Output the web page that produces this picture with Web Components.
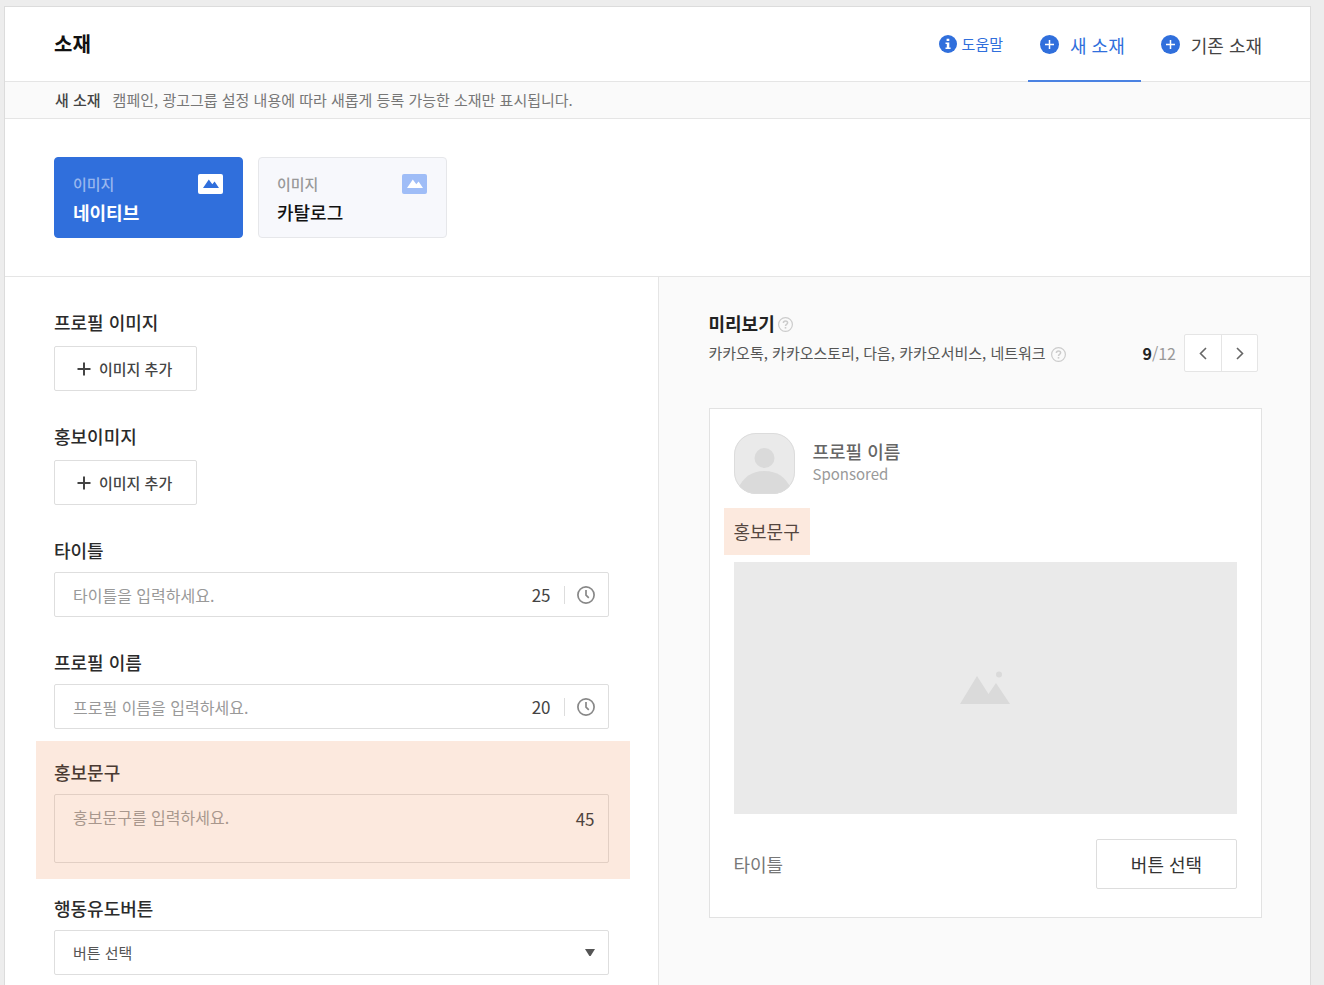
<!DOCTYPE html>
<html lang="ko">
<head>
<meta charset="utf-8">
<meta name="viewport" content="width=device-width, initial-scale=1">
<title>소재</title>
<style>
  :root {
    --blue: #306fdc;
    --line: #e5e5e5;
    --box-line: #dedede;
    --peach: #fce9de;
  }
  body {
    margin: 0;
    padding: 6px 13px 0 4px;
    background: #ededed;
    color: #333;
    font: 400 18px/24px "Noto Sans CJK KR", "Noto Sans", sans-serif;
  }
  .types { display: flex; gap: 15px; padding: 38px 49px; border-bottom: 1px solid var(--line); }
  .columns { display: grid; grid-template-columns: 1fr 1fr; flex: 1; }
  .form { display: flex; flex-direction: column; gap: 33px; padding: 33px 49px 12px; }
  .preview { padding: 34px 48px 40px 50px; background: #fafafa; border-left: 1px solid var(--line); }
</style>
</head>
<body>
<creative-panel heading="소재">
  <help-link slot="tabs">도움말</help-link>
  <panel-tab slot="tabs" active>새 소재</panel-tab>
  <panel-tab slot="tabs">기존 소재</panel-tab>
  <notice-bar heading="새 소재">캠페인, 광고그룹 설정 내용에 따라 새롭게 등록 가능한 소재만 표시됩니다.</notice-bar>
  <section class="types">
    <type-card kind="이미지" selected>네이티브</type-card>
    <type-card kind="이미지">카탈로그</type-card>
  </section>
  <div class="columns">
    <section class="form">
      <image-field label="프로필 이미지"></image-field>
      <image-field label="홍보이미지"></image-field>
      <text-field label="타이틀" hint="타이틀을 입력하세요." count="25"></text-field>
      <text-field label="프로필 이름" hint="프로필 이름을 입력하세요." count="20"></text-field>
      <copy-field label="홍보문구" hint="홍보문구를 입력하세요." count="45"></copy-field>
      <select-field label="행동유도버튼" value="버튼 선택"></select-field>
    </section>
    <section class="preview">
      <preview-head heading="미리보기" page="9" total="12">카카오톡, 카카오스토리, 다음, 카카오서비스, 네트워크</preview-head>
      <ad-preview>
        <span slot="name">프로필 이름</span>
        <span slot="copy">홍보문구</span>
        <span slot="title">타이틀</span>
        <span slot="action">버튼 선택</span>
      </ad-preview>
    </section>
  </div>
</creative-panel>

<script>
const base = `
  *, *::before, *::after { box-sizing: border-box; }
  :host { display: block; }
  svg { display: block; flex: none; }
  button, input, textarea, select { font: inherit; color: inherit; margin: 0; border-radius: 0; }
  button { cursor: pointer; }
`;
const fieldStyle = `
  label { display: block; font-weight: 500; color: #2b2b2b; margin-bottom: 10px; }
  .box { display: flex; align-items: center; height: 45px; border: 1px solid var(--box-line); border-radius: 2px; background: #fff; }
  input, textarea { flex: 1; min-width: 0; border: 0; outline: 0; background: none; padding: 0; font-size: 16px; line-height: 24px; }
  ::placeholder { color: #999; opacity: 1; }
  .count { font-size: 17px; color: #444; }
`;

class BaseElement extends HTMLElement {
  connectedCallback() {
    if (this.shadowRoot) return;
    this.attachShadow({ mode: "open" });
    this.shadowRoot.innerHTML = `<style>${base}${this.styles()}</style>${this.markup()}`;
  }
  attr(name) { return this.getAttribute(name) || ""; }
  styles() { return ""; }
}

class CreativePanel extends BaseElement {
  styles() { return `
    :host { display: flex; flex-direction: column; min-height: calc(100vh - 7px); background: #fff; border: 1px solid #dcdcdc; border-bottom: 0; }
    header { display: flex; height: 75px; justify-content: space-between; padding: 0 32px 0 49px; border-bottom: 1px solid var(--line); }
    h1 { margin: 0; align-self: center; font-size: 20px; font-weight: 700; color: #111; }
    nav { display: flex; }
  `; }
  markup() { return `<header><h1>${this.attr("heading")}</h1><nav><slot name="tabs"></slot></nav></header><slot></slot>`; }
}

class HelpLink extends BaseElement {
  styles() { return `
    :host { display: flex; align-items: center; margin-right: 25px; }
    a { display: flex; align-items: center; gap: 5px; font-size: 15px; color: var(--blue); text-decoration: none; }
  `; }
  markup() { return `<a href="#help"><svg width="18" height="18" viewBox="0 0 18 18"><circle cx="9" cy="9" r="9" fill="#306fdc"/><path d="M7.6 3.8h2.7v2.3H7.6zM6.5 7.4h3.8v5.1h1.3V14H6.5v-1.5h1.3V8.9H6.5z" fill="#fff"/></svg><slot></slot></a>`; }
}

class PanelTab extends BaseElement {
  styles() { return `
    :host { display: flex; margin-bottom: -1px; color: #444; border: solid transparent; border-width: 2px 0; }
    :host([active]) { color: var(--blue); border-bottom-color: #4a82e2; margin-right: 8px; }
    button { display: flex; align-items: center; gap: 11px; padding: 0 16px 0 12px; border: 0; background: none; }
  `; }
  markup() { return `<button type="button"><svg width="19" height="19" viewBox="0 0 19 19"><circle cx="9.5" cy="9.5" r="9.5" fill="#306fdc"/><path d="M9.5 5v9M5 9.5h9" stroke="#fff" stroke-width="1.5"/></svg><slot></slot></button>`; }
}

class NoticeBar extends BaseElement {
  styles() { return `
    :host { display: flex; gap: 12px; align-items: center; height: 36px; padding: 0 50px; background: #fafafa; border-bottom: 1px solid var(--line); font-size: 15px; color: #777; }
    strong { font-weight: 500; color: #444; }
  `; }
  markup() { return `<strong>${this.attr("heading")}</strong><span><slot></slot></span>`; }
}

class TypeCard extends BaseElement {
  styles() { return `
    button { display: grid; grid-template-columns: 1fr auto; row-gap: 4px; width: 189px; padding: 14px 19px 13px 18px; text-align: left; border: 1px solid #e6e7ea; border-radius: 4px; background: #f7f8fc; color: #111; --badge: #9fbdf7; --peak: #fff; }
    :host([selected]) button { background: var(--blue); border-color: var(--blue); color: #fff; --badge: #fff; --peak: #306fdc; }
    .kind { font-size: 15px; color: #999; font-weight: 500; }
    :host([selected]) .kind { color: #98b7ee; }
    .name { grid-column: 1 / -1; font-weight: 500; }
    :host([selected]) .name { font-weight: 700; }
    svg { align-self: center; }
  `; }
  markup() { return `<button type="button"><span class="kind">${this.attr("kind")}</span>
    <svg width="25" height="20" viewBox="0 0 25 20"><rect width="25" height="20" rx="2" style="fill:var(--badge)"/><path d="M5 14l5.8-8.6 3.5 4.8 2.3-2.6L21 14z" style="fill:var(--peak)"/></svg>
    <span class="name"><slot></slot></span></button>`; }
}

class ImageField extends BaseElement {
  styles() { return fieldStyle + `
    label { margin-bottom: 12px; }
    button { display: flex; align-items: center; gap: 8px; height: 45px; padding: 0 24px 0 22px; border: 1px solid var(--box-line); border-radius: 2px; background: #fff; font-size: 15px; font-weight: 500; color: #444; }
  `; }
  markup() { return `<label for="add">${this.attr("label")}</label><button id="add" type="button"><svg width="14" height="14" viewBox="0 0 14 14"><path d="M7 .5v13M.5 7h13" stroke="#444" stroke-width="2"/></svg>이미지 추가</button>`; }
}

class TextField extends BaseElement {
  styles() { return fieldStyle + `
    .box { padding: 0 13px 0 18px; }
    button { padding: 0 0 0 12px; border: 0; border-left: 1px solid #ddd; margin-left: 13px; background: none; }
  `; }
  markup() { return `<label for="in">${this.attr("label")}</label><div class="box"><input id="in" type="text" placeholder="${this.attr("hint")}"><span class="count">${this.attr("count")}</span>
    <button type="button" aria-label="${this.attr("label")}"><svg width="18" height="18" viewBox="0 0 18 18" fill="none" stroke="#888"><circle cx="9" cy="9" r="8.1" stroke-width="1.7"/><path d="M9 4v5.2l2.8 2.6" stroke-width="1.7"/></svg></button></div>`; }
}

class CopyField extends BaseElement {
  styles() { return fieldStyle + `
    :host { margin: -21px -21px -16px -18px; padding: 19px 21px 16px 18px; background: var(--peach); }
    label { color: #4a3a32; }
    .box { height: 69px; align-items: flex-start; padding: 10px 13px 0 18px; background: none; border-color: #e2cfc4; }
    textarea { height: 48px; resize: none; overflow: hidden; }
    ::placeholder { color: #a8978d; }
    .count { padding-top: 2px; color: #4f443e; }
  `; }
  markup() { return `<label for="copy">${this.attr("label")}</label><div class="box"><textarea id="copy" placeholder="${this.attr("hint")}"></textarea><span class="count">${this.attr("count")}</span></div>`; }
}

class SelectField extends BaseElement {
  styles() { return fieldStyle + `
    .box { position: relative; }
    select { appearance: none; width: 100%; height: 100%; padding: 0 40px 0 18px; border: 0; background: none; font-size: 15px; color: #555; }
    svg { position: absolute; right: 13px; pointer-events: none; }
  `; }
  markup() { return `<label for="sel">${this.attr("label")}</label><div class="box"><select id="sel"><option>${this.attr("value")}</option></select><svg width="10" height="7" viewBox="0 0 10 7"><path d="M0 0h10L5.6 7H4.4z" fill="#555"/></svg></div>`; }
}

class HelpMark extends BaseElement {
  styles() { return `
    :host { display: inline-block; }
    button { display: block; padding: 0; border: 0; background: none; }
  `; }
  markup() { return `<button type="button" aria-label="도움말"><svg width="15" height="15" viewBox="0 0 15 15" fill="none" stroke="#ccc"><circle cx="7.5" cy="7.5" r="6.9" stroke-width="1.2"/><path d="M5.4 6c0-1.3.9-2 2.1-2s2.1.7 2.1 1.8c0 1.500-2.100 1.500-2.100 3.100" stroke-width="1.500"/><path d="M7.500 10v1.600" stroke-width="1.600"/></svg></button>`; }
}

class PreviewHead extends BaseElement {
  styles() { return `
    :host { display: flex; justify-content: space-between; align-items: flex-end; margin: 0 4px 36px 0; }
    .texts { padding-bottom: 7px; }
    h2, p { display: flex; align-items: center; gap: 5px; margin: 0; }
    h2 { gap: 3px; font-size: 18px; font-weight: 700; color: #222; margin-bottom: 6px; }
    p { font-size: 15px; color: #555; }
    help-mark { padding-top: 3px; }
    .pager { display: flex; align-items: center; white-space: nowrap; font-size: 16px; color: #999; }
    b { color: #222; }
    .steps { display: flex; margin-left: 8px; border: 1px solid var(--line); border-radius: 2px; background: #fff; }
    .steps button { display: grid; place-items: center; width: 36px; height: 36px; padding: 0; border: 0; background: none; }
    .steps button + button { border-left: 1px solid var(--line); }
  `; }
  markup() { return `<div class="texts"><h2>${this.attr("heading")}<help-mark></help-mark></h2><p><span><slot></slot></span><help-mark></help-mark></p></div>
    <div class="pager"><span><b>${this.attr("page")}</b>/${this.attr("total")}</span><div class="steps">
    <button type="button" aria-label="이전"><svg width="8" height="13" viewBox="0 0 8 13" fill="none" stroke="#666" stroke-width="1.6"><path d="M7 1L1.5 6.5 7 12"/></svg></button>
    <button type="button" aria-label="다음"><svg width="8" height="13" viewBox="0 0 8 13" fill="none" stroke="#666" stroke-width="1.6"><path d="M1 1l5.5 5.5L1 12"/></svg></button></div></div>`; }
}

class AdPreview extends BaseElement {
  styles() { return `
    :host { padding: 24px 24px 28px; background: #fff; border: 1px solid #e2e2e2; }
    .who { display: flex; align-items: center; gap: 18px; color: #666; font-weight: 500; }
    .who div { display: flex; flex-direction: column; padding-bottom: 4px; }
    small { font-size: 15px; line-height: 22px; font-weight: 400; color: #999; }
    .copy { width: fit-content; margin: 14px 0 7px -10px; padding: 10px; line-height: 27px; background: var(--peach); color: #54463f; }
    .image { display: grid; place-items: center; aspect-ratio: 2 / 1; background: #eaeaea; }
    footer { display: flex; justify-content: space-between; align-items: center; margin-top: 25px; color: #777; }
    footer button { width: 141px; height: 50px; border: 1px solid #ddd; border-radius: 2px; background: #fff; color: #333; }
  `; }
  markup() { return `<div class="who"><svg width="61" height="61" viewBox="0 0 61 61"><defs><clipPath id="c"><rect width="61" height="61" rx="22"/></clipPath></defs><g clip-path="url(#c)"><path fill="#eaeaea" d="M0 0h61v61H0z"/><circle cx="30.5" cy="25" r="10" fill="#dadada"/><path d="M4 56c5-12 14-18 26.5-18S52 44 57 56v6H4z" fill="#dadada"/></g><rect x=".5" y=".5" width="60" height="60" rx="21.5" fill="none" stroke="#dcdcdc"/></svg>
    <div><slot name="name"></slot><small>Sponsored</small></div></div>
    <div class="copy"><slot name="copy"></slot></div>
    <div class="image"><svg width="50" height="34" viewBox="0 0 50 34" fill="#dadada"><path d="M0 33L17 5l11.5 18L36 12l14 21z"/><circle cx="39" cy="3.5" r="3"/></svg></div>
    <footer><slot name="title"></slot><button type="button"><slot name="action"></slot></button></footer>`; }
}

const parts = {
  "creative-panel": CreativePanel, "help-link": HelpLink, "panel-tab": PanelTab, "notice-bar": NoticeBar,
  "type-card": TypeCard, "image-field": ImageField, "text-field": TextField, "copy-field": CopyField,
  "select-field": SelectField, "help-mark": HelpMark, "preview-head": PreviewHead, "ad-preview": AdPreview
};
for (const [tag, type] of Object.entries(parts)) customElements.define(tag, type);
</script>
</body>
</html>
